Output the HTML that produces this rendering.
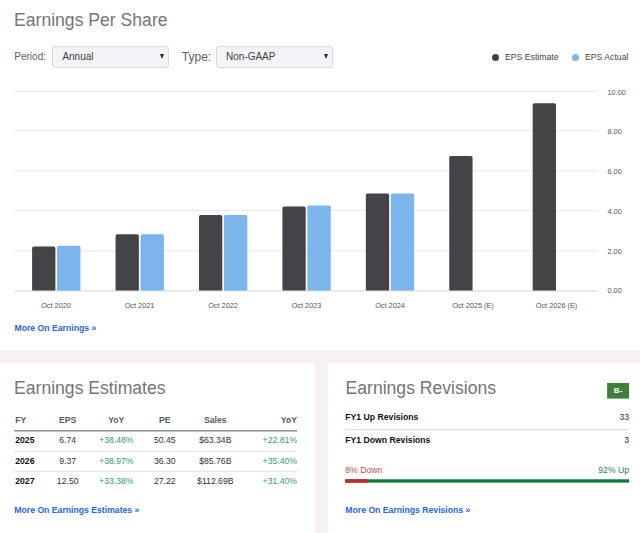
<!DOCTYPE html>
<html><head><meta charset="utf-8">
<style>
html,body{margin:0;padding:0}
body{width:640px;height:533px;overflow:hidden;background:#fff;font-family:"Liberation Sans",sans-serif;position:relative;color:#333}
.abs{position:absolute;white-space:nowrap}
h1,h2{margin:0;font-weight:normal}
.title{font-size:17.6px;color:#757575;left:14px;line-height:20px}
.sel{position:absolute;box-sizing:border-box;border:1px solid #d9dbdf;border-radius:3px;background:#f3f4f8;height:22px;top:46px;font-size:10px;line-height:20px;color:#404040;padding-left:9.4px}
.sel i{position:absolute;right:3.6px;top:6.6px;width:0;height:0;border-left:2.3px solid transparent;border-right:2.3px solid transparent;border-top:5.2px solid #2b2b2b}
.grid{position:absolute;left:14px;width:583px;height:1px;background:#ebebeb}
.ylab{position:absolute;left:607.5px;font-size:7.33px;color:#555;line-height:8px}
.bar{position:absolute;width:23px;border-radius:1.5px 1.5px 0 0}
.d{background:#434246}
.b{background:#7cb5ec}
.xlab{position:absolute;top:301.5px;width:84px;text-align:center;font-size:7.33px;line-height:8px;color:#555}
.link{font-weight:bold;color:#2a64de;font-size:8.67px;line-height:10px}
.band{position:absolute;left:0;top:351px;width:640px;height:182px;background:#f4f1f0}
.card{position:absolute;top:363px;height:170px;background:#fff}
table{border-collapse:collapse}
.t{position:absolute;left:14.5px;top:411px;width:282.5px;font-size:8.67px;color:#333}
.t td,.t th{padding:0;height:19px;text-align:center;font-weight:normal;line-height:10px;vertical-align:middle}
.t th{color:#555;font-weight:bold;height:18px;border-bottom:2px solid #666}
.t td{border-bottom:1px solid #e2e2e2}
.t tr:last-child td{border-bottom:none}
.t .l{text-align:left}
.t .r{text-align:right}
.t .g{color:#3a9c6e}
.t b{color:#111}

.tr{position:absolute;left:0;width:320px;height:10px;font-size:8.67px;line-height:10px;color:#333}
.tr .c{position:absolute;top:0;text-align:center;white-space:nowrap}
.tr.h{font-weight:bold;color:#5a5a5a}
.tr .g{color:#3a9c6e}
.tr b{color:#111}
.rv{position:absolute;left:345.3px;width:283.8px;font-size:8.67px;line-height:10px;color:#333}
.rv b{color:#111}
.rv span{position:absolute;right:0;top:0}

</style></head><body>
<div class="abs title" style="top:9.8px">Earnings Per Share</div>
<div class="abs" style="left:14.3px;top:51px;font-size:10px;line-height:12px;color:#606060">Period:</div>
<div class="sel" style="left:52px;width:117px">Annual<i></i></div>
<div class="abs" style="left:181.8px;top:49.7px;font-size:12px;line-height:14px;color:#606060">Type:</div>
<div class="sel" style="left:216px;width:117px;padding-left:9px">Non-GAAP<i></i></div>

<div class="abs" style="left:492px;top:54px;width:7px;height:7px;border-radius:50%;background:#434246"></div>
<div class="abs" style="left:505px;top:52px;font-size:8.7px;line-height:11px;color:#444">EPS Estimate</div>
<div class="abs" style="left:571.7px;top:54px;width:7px;height:7px;border-radius:50%;background:#7cb5ec"></div>
<div class="abs" style="left:585px;top:52px;font-size:8.7px;line-height:11px;color:#444">EPS Actual</div>

<svg class="abs" style="left:0;top:0" width="640" height="350" viewBox="0 0 640 350">
<line x1="14.3" x2="597" y1="91.26" y2="91.26" stroke="#e6e6e6" stroke-width="1"/>
<line x1="14.3" x2="597" y1="130.66" y2="130.66" stroke="#e6e6e6" stroke-width="1"/>
<line x1="14.3" x2="597" y1="170.80" y2="170.80" stroke="#e6e6e6" stroke-width="1"/>
<line x1="14.3" x2="597" y1="210.66" y2="210.66" stroke="#e6e6e6" stroke-width="1"/>
<line x1="14.3" x2="597" y1="250.80" y2="250.80" stroke="#e6e6e6" stroke-width="1"/>
<line x1="14.3" x2="598.6" y1="290.90" y2="290.90" stroke="#d4d4d4" stroke-width="1"/>
<path d="M32.12 290.60V248.20Q32.12 246.60 33.72 246.60H53.81Q55.41 246.60 55.41 248.20V290.60Z" fill="#434348"/>
<path d="M56.72 290.60V247.40Q56.72 245.80 58.32 245.80H78.52Q80.12 245.80 80.12 247.40V290.60Z" fill="#7cb5ec" transform="translate(0.35,0)"/>
<path d="M115.55 290.60V235.90Q115.55 234.30 117.15 234.30H137.25Q138.85 234.30 138.85 235.90V290.60Z" fill="#434348"/>
<path d="M140.15 290.60V235.90Q140.15 234.30 141.75 234.30H161.95Q163.55 234.30 163.55 235.90V290.60Z" fill="#7cb5ec" transform="translate(0.35,0)"/>
<path d="M198.98 290.60V216.70Q198.98 215.10 200.58 215.10H220.68Q222.28 215.10 222.28 216.70V290.60Z" fill="#434348"/>
<path d="M223.58 290.60V216.70Q223.58 215.10 225.18 215.10H245.38Q246.98 215.10 246.98 216.70V290.60Z" fill="#7cb5ec" transform="translate(0.35,0)"/>
<path d="M282.41 290.60V208.20Q282.41 206.60 284.01 206.60H304.10Q305.70 206.60 305.70 208.20V290.60Z" fill="#434348"/>
<path d="M307.00 290.60V207.20Q307.00 205.60 308.61 205.60H328.81Q330.41 205.60 330.41 207.20V290.60Z" fill="#7cb5ec" transform="translate(0.35,0)"/>
<path d="M365.84 290.60V195.20Q365.84 193.60 367.44 193.60H387.54Q389.14 193.60 389.14 195.20V290.60Z" fill="#434348"/>
<path d="M390.44 290.60V195.20Q390.44 193.60 392.04 193.60H412.24Q413.84 193.60 413.84 195.20V290.60Z" fill="#7cb5ec" transform="translate(0.35,0)"/>
<path d="M449.27 290.60V157.60Q449.27 156.00 450.87 156.00H470.96Q472.56 156.00 472.56 157.60V290.60Z" fill="#434348"/>
<path d="M532.70 290.60V104.80Q532.70 103.20 534.30 103.20H554.39Q556.00 103.20 556.00 104.80V290.60Z" fill="#434348"/>
</svg>
<div class="ylab" style="top:88.70px">10.00</div>
<div class="ylab" style="top:128.10px">8.00</div>
<div class="ylab" style="top:167.50px">6.00</div>
<div class="ylab" style="top:207.70px">4.00</div>
<div class="ylab" style="top:248.20px">2.00</div>
<div class="ylab" style="top:287.40px">0.00</div>


<div class="xlab" style="left:14px">Oct 2020</div>
<div class="xlab" style="left:97.5px">Oct 2021</div>
<div class="xlab" style="left:181px">Oct 2022</div>
<div class="xlab" style="left:264.5px">Oct 2023</div>
<div class="xlab" style="left:348px">Oct 2024</div>
<div class="xlab" style="left:431px">Oct 2025 (E)</div>
<div class="xlab" style="left:514.5px">Oct 2026 (E)</div>

<div class="abs link" style="left:14.5px;top:322.5px">More On Earnings »</div>

<svg class="abs" style="left:0;top:340px" width="640" height="193" viewBox="0 340 640 193">
<rect x="0" y="350.6" width="640" height="190" fill="#f5f2f1"/>
<rect x="0" y="363.1" width="314.7" height="180" fill="#fff"/>
<rect x="328" y="363.1" width="312" height="180" fill="#fff"/>
<rect x="14.4" y="430.1" width="282.6" height="1.4" fill="#7d8a8c"/>
<rect x="14.4" y="450.9" width="282.6" height="1" fill="#dedede"/>
<rect x="14.4" y="470.7" width="282.6" height="1" fill="#dedede"/>
<rect x="607.1" y="383" width="22" height="15.6" fill="#3f7f3c"/>
<rect x="345.2" y="429.1" width="284" height="1" fill="#dcdcdc"/>
<rect x="345.2" y="479.3" width="284" height="3.3" fill="#0e7a3e"/>
<rect x="345.2" y="479.3" width="22.8" height="3.3" fill="#cc2229"/>
</svg>

<div class="abs title" style="top:378px">Earnings Estimates</div>
<div class="abs title" style="top:378px;left:345.5px">Earnings Revisions</div>

<div class="tr h" style="top:415.40px">
<span class="c" style="left:15.2px;text-align:left">FY</span>
<span class="c" style="left:27.7px;width:80px">EPS</span>
<span class="c" style="left:76.3px;width:80px">YoY</span>
<span class="c" style="left:124.8px;width:80px">PE</span>
<span class="c" style="left:175.3px;width:80px">Sales</span>
<span class="c" style="left:217px;width:80px;text-align:right">YoY</span>
</div>
<div class="tr r" style="top:435.30px">
<span class="c" style="left:15.2px;text-align:left"><b>2025</b></span>
<span class="c" style="left:27.7px;width:80px">6.74</span>
<span class="c g" style="left:76.3px;width:80px">+38.48%</span>
<span class="c" style="left:124.8px;width:80px">50.45</span>
<span class="c" style="left:175.3px;width:80px">$63.34B</span>
<span class="c g" style="left:217px;width:80px;text-align:right">+22.81%</span>
</div>
<div class="tr r" style="top:455.70px">
<span class="c" style="left:15.2px;text-align:left"><b>2026</b></span>
<span class="c" style="left:27.7px;width:80px">9.37</span>
<span class="c g" style="left:76.3px;width:80px">+38.97%</span>
<span class="c" style="left:124.8px;width:80px">36.30</span>
<span class="c" style="left:175.3px;width:80px">$85.76B</span>
<span class="c g" style="left:217px;width:80px;text-align:right">+35.40%</span>
</div>
<div class="tr r" style="top:475.80px">
<span class="c" style="left:15.2px;text-align:left"><b>2027</b></span>
<span class="c" style="left:27.7px;width:80px">12.50</span>
<span class="c g" style="left:76.3px;width:80px">+33.38%</span>
<span class="c" style="left:124.8px;width:80px">27.22</span>
<span class="c" style="left:175.3px;width:80px">$112.69B</span>
<span class="c g" style="left:217px;width:80px;text-align:right">+31.40%</span>
</div>
<div class="abs link" style="left:14.3px;top:505px">More On Earnings Estimates »</div>

<div class="abs" style="left:607.1px;top:383px;width:22px;height:15.6px;color:#fff;font-weight:bold;font-size:8px;line-height:15px;text-align:center">B-</div>
<div class="rv" style="top:412px"><b>FY1 Up Revisions</b><span>33</span></div>
<div class="rv" style="top:435px"><b>FY1 Down Revisions</b><span>3</span></div>
<div class="rv" style="top:465px;color:#c0504d">8% Down<span style="color:#2e7d5b">92% Up</span></div>
<div class="abs link" style="left:345.3px;top:505px">More On Earnings Revisions »</div>
</body></html>
